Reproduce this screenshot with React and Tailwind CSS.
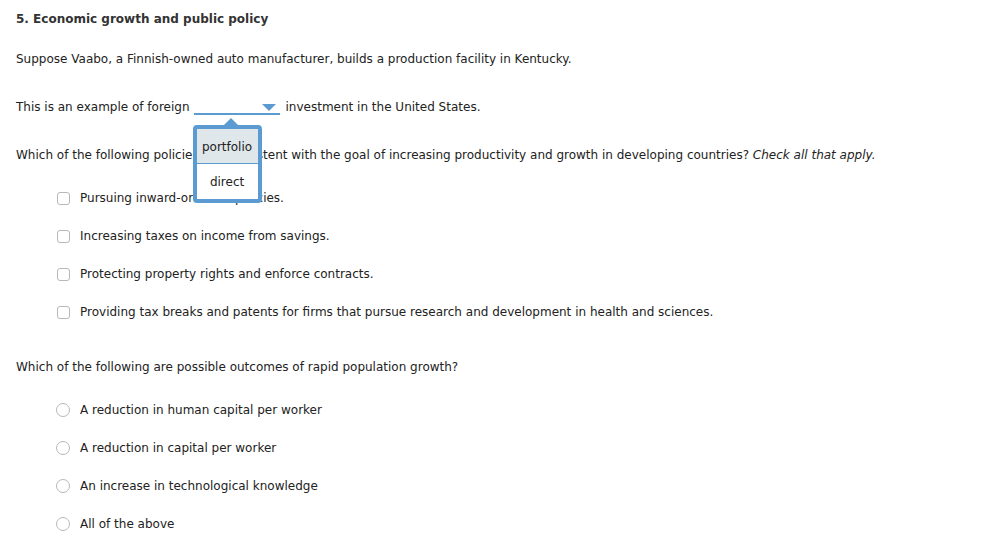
import React from "react";

const policies = [
  "Pursuing inward-oriented policies.",
  "Increasing taxes on income from savings.",
  "Protecting property rights and enforce contracts.",
  "Providing tax breaks and patents for firms that pursue research and development in health and sciences.",
];

const outcomes = [
  "A reduction in human capital per worker",
  "A reduction in capital per worker",
  "An increase in technological knowledge",
  "All of the above",
];

const Check = () => (
  <span className="w-[13px] h-[13px] rounded-[3px] border border-[#b8b8b8] bg-white shrink-0" />
);

const Radio = () => (
  <span className="w-[14px] h-[14px] rounded-full border border-[#b8b8b8] bg-white shrink-0" />
);

export default function App() {
  return (
    <div
      className="w-[1000px] h-[537px] bg-white text-[#222] text-[12px] leading-[16px] px-4 pt-[11px] overflow-hidden"
      style={{ fontFamily: '"DejaVu Sans", Verdana, sans-serif' }}
    >
      <h1 className="font-bold text-[#333] text-[12px]">5. Economic growth and public policy</h1>

      <p className="mt-[24px]">Suppose Vaabo, a Finnish-owned auto manufacturer, builds a production facility in Kentucky.</p>

      <div className="mt-[32px] flex items-center">
        <span>This is an example of foreign</span>
        <span className="relative ml-[4px] mr-[6px] w-[86px] h-[16px] border-b-2 border-[#5b9bd1]">
          <span className="absolute right-[4px] top-[5px] w-0 h-0 border-l-[7px] border-r-[7px] border-t-[7px] border-l-transparent border-r-transparent border-t-[#5b9bd1]" />
          {/* open menu */}
          <span className="absolute left-[-1px] top-[26px] z-10 w-[69px] rounded-[4px] border-[4px] border-[#5b9bd1] bg-white flex flex-col">
            <span className="absolute left-[27px] top-[-11px] w-0 h-0 border-l-[7px] border-r-[7px] border-b-[7px] border-l-transparent border-r-transparent border-b-[#5b9bd1]" />
            <span className="h-[35px] pt-[1px] flex items-center justify-center bg-[#dfe7ea] border-b border-[#5b9bd1]">portfolio</span>
            <span className="h-[35px] pt-[1px] flex items-center justify-center">direct</span>
          </span>
        </span>
        <span>investment in the United States.</span>
      </div>

      <p className="mt-[32px]">
        Which of the following policies are consistent with the goal of increasing productivity and growth in developing countries?{" "}
        <em>Check all that apply.</em>
      </p>

      <div className="mt-[27px] pl-[41px] flex flex-col gap-[22px]">
        {policies.map((p) => (
          <label key={p} className="flex items-center gap-[10px]">
            <Check />
            <span>{p}</span>
          </label>
        ))}
      </div>

      <p className="mt-[39px]">Which of the following are possible outcomes of rapid population growth?</p>

      <div className="mt-[27px] pl-[40px] flex flex-col gap-[22px]">
        {outcomes.map((o) => (
          <label key={o} className="flex items-center gap-[10px]">
            <Radio />
            <span>{o}</span>
          </label>
        ))}
      </div>
    </div>
  );
}
